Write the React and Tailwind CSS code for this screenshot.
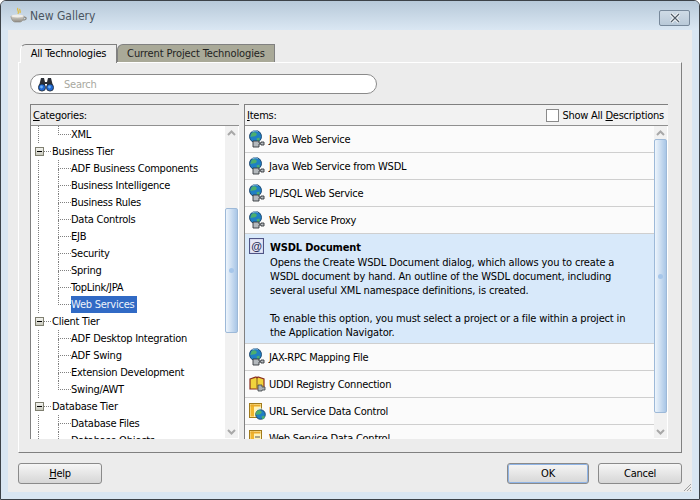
const FONT = "font-['DejaVu_Sans_Condensed','Liberation_Sans',sans-serif] text-[11px] tracking-[-0.25px]";

function Cup() {
  return (
    <svg width="18" height="18" viewBox="0 0 18 18" className="shrink-0">
      <defs>
        <linearGradient id="cupFill" x1="0" y1="0" x2="0" y2="1">
          <stop offset="0" stopColor="#d8d5ce" />
          <stop offset="1" stopColor="#8f8b83" />
        </linearGradient>
      </defs>
      <path d="M8 1c-2 2 2 3 0 6M10 2c-1 1 1 2 0 4" stroke="#e0bd45" strokeWidth="1.300" fill="none" />
      <path d="M1 9h13c0 3-2 6-4 6H5C3 15 1 12 1 9z" fill="url(#cupFill)" stroke="#8c887f" strokeWidth=".6" />
      <path d="M14 10c3 0 3 3-1 3" stroke="#8c887f" strokeWidth="1.200" fill="none" />
      <ellipse cx="7.500" cy="9" rx="6.500" ry="1.500" fill="#f0eee9" />
    </svg>
  );
}

function Binoculars() {
  return (
    <svg width="16" height="15" viewBox="0 0 16 15" className="shrink-0">
      <path d="M3 1h3l1 4h2l1-4h3l2 8H9V7H7v2H1z" fill="#2b2f36" />
      <circle cx="4" cy="10.500" r="3.600" fill="#1f66cf" stroke="#20242a" strokeWidth=".8" />
      <circle cx="12" cy="10.500" r="3.600" fill="#1f66cf" stroke="#20242a" strokeWidth=".8" />
      <circle cx="3.500" cy="10" r="1.400" fill="#6db0f5" />
      <circle cx="11.500" cy="10" r="1.400" fill="#6db0f5" />
    </svg>
  );
}

function Globe({ x = 6.5, y = 6.5, r = 6 }) {
  return (
    <g>
      <circle cx={x} cy={y} r={r} fill="#1f7fc4" stroke="#173f68" strokeWidth=".9" />
      <path d={`M${x - 4} ${y - 3}c2-2 4-1 5 0s-1 3-3 3-3 1-3 0z`} fill="#4caf6e" />
      <path d={`M${x + 1} ${y + 2}l3-1 0 3-2 1z`} fill="#4caf6e" />
      <path d={`M${x - 3} ${y - 5}c2-1 4-1 5 0`} stroke="#c8e6f8" strokeWidth=".9" fill="none" />
    </g>
  );
}

function ServiceIcon() {
  return (
    <svg width="17" height="18" viewBox="0 0 17 18" className="shrink-0">
      <Globe />
      <path d="M4 11h6v2h2v-1h3v3h-3v-1h-2v3H4z" fill="#b4b9bd" stroke="#33383c" strokeWidth=".9" />
    </svg>
  );
}

function AtIcon() {
  return (
    <svg width="16" height="17" viewBox="0 0 16 17" className="shrink-0">
      <rect x=".5" y=".5" width="14" height="15" fill="#c9cde8" stroke="#4f5485" />
      <rect x="1.500" y="1.500" width="12" height="13" fill="#e6e8f6" />
      <text x="7.500" y="12" textAnchor="middle" fontSize="11" fontWeight="700" fill="#2a2f58" fontFamily="Liberation Sans, sans-serif">@</text>
    </svg>
  );
}

function BookIcon() {
  return (
    <svg width="17" height="16" viewBox="0 0 17 16" className="shrink-0">
      <path d="M1 3l6-2 1 1 1-1 6 2v10H1z" fill="#f1d33c" stroke="#8a2f20" strokeWidth="1.200" />
      <path d="M8 2v10" stroke="#8a5a20" />
      <path d="M9 9h4v2h3v3h-3v1H9z" fill="#aab0b5" stroke="#3f4448" strokeWidth=".8" />
    </svg>
  );
}

function DataIcon({ globe }) {
  return (
    <svg width="17" height="17" viewBox="0 0 17 17" className="shrink-0">
      <rect x=".5" y=".5" width="12" height="14" fill="#fff3b8" stroke="#a07a1c" />
      <rect x="1.500" y="1.500" width="3.500" height="12" fill="#f0b52c" />
      <rect x="1.500" y="1.500" width="10" height="2" fill="#e8a92a" />
      {globe ? <Globe x={11.500} y={11.500} r={4.800} /> : <path d="M6 7h5M6 10h5" stroke="#555" />}
    </svg>
  );
}

function Scrollbar({ before, thumb }) {
  return (
    <div className="flex w-[14px] shrink-0 flex-col border-b border-r border-white bg-[#f1f1f1]">
      <div className="flex h-[13px] shrink-0 items-center justify-center">
        <svg width="9" height="6" viewBox="0 0 9 6"><path d="M1 5l3.500-3.500L8 5" stroke="#a8a8a8" strokeWidth="2" fill="none" /></svg>
      </div>
      <div className="shrink-0" style={{ height: before }} />
      <div className="flex shrink-0 items-center justify-center rounded-[2px] border border-[#9db9d8] bg-gradient-to-r from-[#eef5fc] to-[#a9c6e6]" style={{ height: thumb }}>
        <div className="h-[5px] w-[5px] rounded-full bg-[#a6c6ea]" />
      </div>
      <div className="flex-1" />
      <div className="flex h-[13px] shrink-0 items-center justify-center">
        <svg width="9" height="6" viewBox="0 0 9 6"><path d="M1 1l3.500 3.500L8 1" stroke="#a8a8a8" strokeWidth="2" fill="none" /></svg>
      </div>
    </div>
  );
}

function TierRow({ label }) {
  return (
    <div className="flex h-[17px] shrink-0 items-center pl-[4px]">
      <div className="flex h-[9px] w-[9px] shrink-0 items-center justify-center border border-[#7f7f70] bg-gradient-to-b from-[#f4f4f0] to-[#c9c9bd]">
        <div className="h-px w-[5px] bg-black" />
      </div>
      <div className="h-0 w-[7px] shrink-0 border-t border-dotted border-[#808080]" />
      <span className="mt-[2px] pl-px">{label}</span>
    </div>
  );
}

function LeafRow({ label, last, selected }) {
  return (
    <div className="flex h-[17px] shrink-0 items-center">
      <div className="ml-[7px] h-full w-[20px] shrink-0 border-l border-dotted border-[#808080]" />
      <div className="flex h-full w-[13px] shrink-0 flex-col">
        <div className="h-[9px] w-full border-b border-l border-dotted border-[#808080]" />
        <div className={`h-[8px] w-full ${last ? "" : "border-l border-dotted border-[#808080]"}`} />
      </div>
      <span className={selected ? "flex h-full items-center bg-[#316ac5] pr-[3px] pt-[2px] text-[#eef3fb]" : "mt-[2px]"}>{label}</span>
    </div>
  );
}

function ItemRow({ icon, label }) {
  return (
    <div className="flex h-[27px] shrink-0 items-center gap-[3px] border-b border-[#cfcfcf] bg-[#fbfbfb] pl-[4px]">
      <div className="flex w-[17px] shrink-0 justify-center">{icon}</div>
      <span className="mt-[2px]">{label}</span>
    </div>
  );
}

function Btn({ className = "", children }) {
  return (
    <button className={`flex h-[21px] items-center justify-center rounded-[3px] border border-[#8a8a8a] bg-gradient-to-b from-[#f6f6f6] to-[#d6d6d6] pt-[2px] text-black ${className}`}>
      {children}
    </button>
  );
}

export default function App() {
  return (
    <div className={`${FONT} flex h-[500px] w-[700px] flex-col overflow-hidden rounded-t-[6px] border border-[#3c4248] bg-[#d9e6f2] text-black`}>
      <div className="flex h-[29px] shrink-0 items-center bg-gradient-to-b from-[#b7c9d9] to-[#dae7f3] pl-[9px] pr-[9px]">
        <Cup />
        <span className="ml-[2px] text-[12px] tracking-normal text-[#4a5560]">New Gallery</span>
        <div className="ml-auto mt-[5px] flex h-[16px] w-[31px] shrink-0 items-center justify-center rounded-[2px] border border-[#77889a] bg-gradient-to-b from-[#cfdbe6] to-[#b9c9d8]">
          <svg width="12" height="10" viewBox="0 0 12 10"><path d="M2 1l8 8M10 1L2 9" stroke="#fff" strokeWidth="3" /><path d="M2 1l8 8M10 1L2 9" stroke="#4e5a66" strokeWidth="1.200" /></svg>
        </div>
      </div>

      <div className="relative mx-[7px] flex h-[462px] shrink-0 flex-col bg-[#ececec] px-[10px] pt-[14px]">
        <div className="flex h-[18px] shrink-0 pl-[2px]">
          <div className="z-10 flex h-[19px] w-[97px] items-center justify-center rounded-tl-[6px] border-l border-r border-t border-l-white border-r-[#808080] border-t-[#808080] bg-[#ececec] tracking-[-0.2px]">All Technologies</div>
          <div className="flex w-[158px] items-center justify-center rounded-tl-[6px] border-l border-r border-t border-[#808080] bg-[#a9a998] pt-[2px] tracking-[-0.1px] text-[#1f1f1f]">Current Project Technologies</div>
        </div>

        <div className="flex h-[391px] w-[664px] shrink-0 flex-col border-b border-l border-r border-t border-b-[#808080] border-l-white border-r-[#808080] border-t-white px-[11px] pt-[11px]">
          <div className="flex h-[20px] w-[347px] shrink-0 items-center rounded-[10px] border border-[#8a8a8a] bg-white pl-[7px]">
            <Binoculars />
            <span className="ml-[10px] mt-[2px] text-[#a8a8a0]">Search</span>
          </div>

          <div className="mt-[10px] flex h-[335px] shrink-0 gap-[5px]">
            <div className="flex w-[209px] shrink-0 flex-col border-l border-t border-[#808080]">
              <div className="flex h-[21px] shrink-0 items-center border-b border-[#909090] pl-[2px]"><span className="mt-[2px]"><u>C</u>ategories:</span></div>
              <div className="flex min-h-0 flex-1">
                <div className="flex min-w-0 flex-1 flex-col overflow-hidden bg-white">
                  <LeafRow label="XML" last />
                  <TierRow label="Business Tier" />
                  <LeafRow label="ADF Business Components" />
                  <LeafRow label="Business Intelligence" />
                  <LeafRow label="Business Rules" />
                  <LeafRow label="Data Controls" />
                  <LeafRow label="EJB" />
                  <LeafRow label="Security" />
                  <LeafRow label="Spring" />
                  <LeafRow label="TopLink/JPA" />
                  <LeafRow label="Web Services" last selected />
                  <TierRow label="Client Tier" />
                  <LeafRow label="ADF Desktop Integration" />
                  <LeafRow label="ADF Swing" />
                  <LeafRow label="Extension Development" />
                  <LeafRow label="Swing/AWT" last />
                  <TierRow label="Database Tier" />
                  <LeafRow label="Database Files" />
                  <LeafRow label="Database Objects" />
                </div>
                <Scrollbar before={69} thumb={125} />
              </div>
            </div>

            <div className="flex w-[424px] shrink-0 flex-col border-l border-t border-[#808080]">
              <div className="flex h-[21px] shrink-0 items-center border-b border-[#909090] bg-[#f2f2f2] pl-[2px] pr-[4px]">
                <span className="mt-[2px]"><u>I</u>tems:</span>
                <div className="ml-auto h-[13px] w-[13px] border border-[#8a8a8a] bg-white" />
                <span className="ml-[3px] mt-[2px]">Show All <u>D</u>escriptions</span>
              </div>
              <div className="flex min-h-0 flex-1">
                <div className="flex min-w-0 flex-1 flex-col overflow-hidden bg-white">
                  <ItemRow icon={<ServiceIcon />} label="Java Web Service" />
                  <ItemRow icon={<ServiceIcon />} label="Java Web Service from WSDL" />
                  <ItemRow icon={<ServiceIcon />} label="PL/SQL Web Service" />
                  <ItemRow icon={<ServiceIcon />} label="Web Service Proxy" />
                  <div className="flex h-[110px] shrink-0 gap-[5px] border-b border-[#cfcfcf] bg-[#d8e9fa] pl-[4px] pt-[4px]">
                    <div className="w-[16px] shrink-0"><AtIcon /></div>
                    <div className="whitespace-nowrap leading-[14px] tracking-[-0.15px]">
                      <div className="mt-[3px] font-bold">WSDL Document</div>
                      <div className="mt-px">Opens the Create WSDL Document dialog, which allows you to create a</div>
                      <div>WSDL document by hand. An outline of the WSDL document, including</div>
                      <div>several useful XML namespace definitions, is created.</div>
                      <div className="mt-[14px]">To enable this option, you must select a project or a file within a project in</div>
                      <div>the Application Navigator.</div>
                    </div>
                  </div>
                  <ItemRow icon={<ServiceIcon />} label="JAX-RPC Mapping File" />
                  <ItemRow icon={<BookIcon />} label="UDDI Registry Connection" />
                  <ItemRow icon={<DataIcon globe />} label="URL Service Data Control" />
                  <ItemRow icon={<DataIcon />} label="Web Service Data Control" />
                </div>
                <Scrollbar before={0} thumb={274} />
              </div>
            </div>
          </div>
        </div>

        <div className="mt-[10px] flex shrink-0 justify-between">
          <Btn className="w-[84px]"><span><u>H</u>elp</span></Btn>
          <div className="flex gap-[9px]">
            <Btn className="w-[82px] border-[#7f8ea0] shadow-[inset_0_0_0_1px_#8fb4e6]">OK</Btn>
            <Btn className="w-[84px]">Cancel</Btn>
          </div>
        </div>

        <svg width="9" height="9" viewBox="0 0 9 9" className="absolute bottom-0 right-0">
          <path d="M1 8l7-7M4 8l4-4M7 8l1-1" stroke="#a0a0a0" />
        </svg>
      </div>
    </div>
  );
}
